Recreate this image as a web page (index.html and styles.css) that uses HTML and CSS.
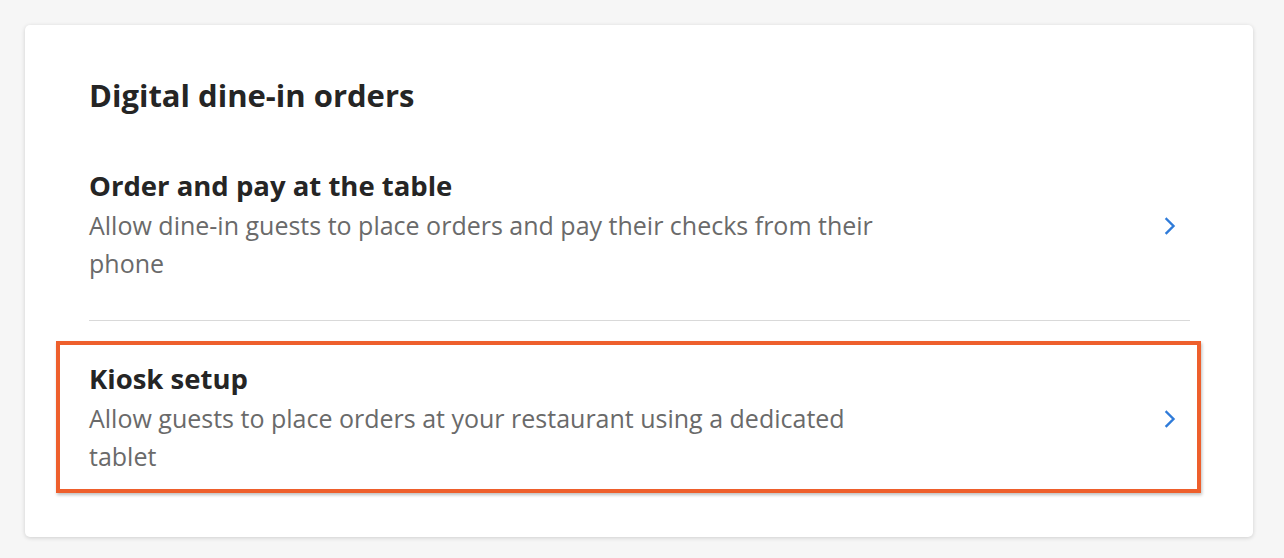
FILE: index.html
```html
<!DOCTYPE html>
<html lang="en">
<head>
    <meta charset="UTF-8">
    <meta name="viewport" content="width=device-width, initial-scale=1.0">
    <title>Digital dine-in orders</title>
    <link rel="stylesheet" href="styles.css">
</head>
<body>
    <div class="card">
        <h2 class="card-title">Digital dine-in orders</h2>
        <div class="option-list">
            <a class="option" href="#">
                <div class="option-text">
                    <span class="option-name">Order and pay at the table</span>
                    <span class="option-desc">Allow dine-in guests to place orders and pay their checks from their phone</span>
                </div>
                <svg class="chevron" width="12" height="18" viewBox="0 0 12 18">
                    <polyline points="2.5,2 9.5,9 2.5,16" fill="none" stroke="#2f7bd9" stroke-width="2.4" stroke-linecap="square"/>
                </svg>
            </a>
            <a class="option highlighted" href="#">
                <div class="option-text">
                    <span class="option-name">Kiosk setup</span>
                    <span class="option-desc">Allow guests to place orders at your restaurant using a dedicated tablet</span>
                </div>
                <svg class="chevron" width="12" height="18" viewBox="0 0 12 18">
                    <polyline points="2.5,2 9.5,9 2.5,16" fill="none" stroke="#2f7bd9" stroke-width="2.4" stroke-linecap="square"/>
                </svg>
            </a>
        </div>
    </div>
</body>
</html>
```

FILE: styles.css
```css
body{
    margin: 0;
    padding: 25px 31px 20px 25px;
    background-color: #f6f6f6;
    font-family: "Open Sans", "Noto Sans", sans-serif;
    color: #252525;
}
.card{
    background-color: #fff;
    border-radius: 5px;
    box-shadow: 0 1px 4px rgba(0, 0, 0, 0.16);
    padding: 52px 63px 24px 64px;
}
.card-title{
    margin: 0 0 15px;
    font-size: 31px;
    line-height: 36px;
    font-weight: 700;
}
.option{
    display: flex;
    align-items: center;
    padding: 42px 0 38px;
    text-decoration: none;
    color: inherit;
}
.option + .option{
    border-top: 1px solid #d9d9d9;
}
.option-text{
    flex: 1;
    max-width: 800px;
}
.option-name{
    display: block;
    font-size: 27.5px;
    line-height: 32px;
    font-weight: 700;
}
.option-desc{
    display: block;
    padding-top: 4px;
    font-size: 25px;
    line-height: 38px;
    color: #6a6a6a;
}
.chevron{
    margin-left: auto;
    margin-right: 14px;
}
.highlighted{
    position: relative;
}
.highlighted::after{
    content: "";
    position: absolute;
    top: 20px;
    bottom: 20px;
    left: -33px;
    right: -11px;
    border: 4px solid #ee5f2c;
    box-shadow: 1px 2px 3px rgba(0, 0, 0, 0.25);
    pointer-events: none;
}
```
